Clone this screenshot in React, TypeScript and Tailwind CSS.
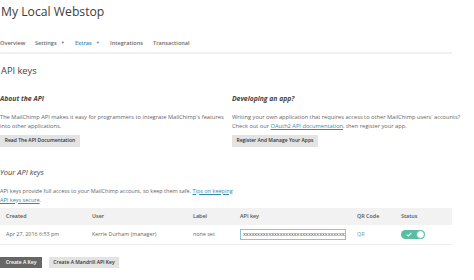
import React from "react";

const font = { fontFamily: '"Open Sans", "Liberation Sans", sans-serif' };

function Caret() {
  return <span className="ml-[4px] text-[4px] align-middle">▼</span>;
}

function Toggle() {
  return (
    <div className="w-[24px] h-[9px] rounded-full bg-[#5bbba3] relative flex items-center">
      <svg width="6" height="5" viewBox="0 0 6 5" className="ml-[5px]">
        <path d="M0.7 2.6 L2.3 4 L5.3 0.8" stroke="#fff" strokeWidth="1.1" fill="none" />
      </svg>
      <div className="absolute right-[0.5px] top-[0px] w-[9px] h-[9px] rounded-full bg-white border border-[#5bbba3]" />
    </div>
  );
}

export default function App() {
  return (
    <div className="w-[474px] h-[280px] bg-white overflow-hidden text-[#555]" style={font}>
      <div className="h-[24px] flex items-center pl-[1px] text-[12.2px] text-[#3d3d3d]">My Local Webstop</div>
      <div className="mt-[12px] w-[452px] h-[18px] pb-[2px] border-b-2 border-[#f0f0f0] flex items-center text-[5.6px] font-semibold text-[#6a6a6a]">
        <span className="w-[35px]">Overview</span>
        <span className="w-[40px]">Settings<Caret /></span>
        <span className="w-[35px] text-[#3e8db0]">Extras<Caret /></span>
        <span className="w-[43px]">Integrations</span>
        <span>Transactional</span>
      </div>
      <div className="mt-[9px] h-[16px] flex items-center pl-[1px] text-[9.3px] text-[#444]">API keys</div>
      <div className="flex">
        <div className="w-[232px]">
          <div className="mt-[15px] h-[10px] flex items-center text-[6.8px] font-bold italic text-[#444]">About the API</div>
          <p className="mt-[9px] text-[5.7px] leading-[8.5px] text-[#666]">
            The MailChimp API makes it easy for programmers to integrate MailChimp's features<br />into other applications.
          </p>
          <div className="mt-[5px] h-[12px] w-[80px] bg-[#e3e3e3] flex items-center justify-center text-[5px] font-semibold text-[#333]">Read The API Documentation</div>
        </div>
        <div className="flex-1">
          <div className="mt-[15px] h-[10px] flex items-center text-[6.8px] font-bold italic text-[#444]">Developing an app?</div>
          <p className="mt-[9px] text-[5.7px] leading-[8.5px] text-[#666]">
            Writing your own application that requires access to other MailChimp users' accounts?<br />Check out our <span className="text-[#2f8cb0] underline">OAuth2 API documentation</span>, then register your app.
          </p>
          <div className="mt-[5px] h-[12px] w-[86px] bg-[#e3e3e3] flex items-center justify-center text-[5px] font-semibold text-[#333]">Register And Manage Your Apps</div>
        </div>
      </div>
      <div className="mt-[21px] h-[10px] flex items-center text-[7.5px] italic text-[#444]">Your API keys</div>
      <p className="mt-[8.5px] text-[5.5px] leading-[9px] text-[#666]">
        API keys provide full access to your MailChimp account, so keep them safe. <span className="text-[#2f8cb0] underline">Tips on keeping</span><br /><span className="text-[#2f8cb0] underline">API keys secure</span>.
      </p>
      <div className="mt-[3.5px] w-[452px]">
        <div className="h-[17px] bg-[#f2f2f2] flex items-center text-[5.4px] font-semibold text-[#555]">
          <span className="w-[92px] pl-[6px]">Created</span>
          <span className="w-[101px]">User</span>
          <span className="w-[47px]">Label</span>
          <span className="w-[117px]">API key</span>
          <span className="w-[44px]">QR Code</span>
          <span>Status</span>
        </div>
        <div className="h-[20px] border-b border-[#eeeeee] flex items-center text-[5.4px] text-[#666]">
          <span className="w-[92px] pl-[6px]">Apr 27, 2016 6:53 pm</span>
          <span className="w-[101px]">Kerrie Durham (manager)</span>
          <span className="w-[47px]">none set</span>
          <div className="w-[117px]">
            <div className="w-[106px] h-[11px] border border-[#86c6d8] flex items-center px-[2px] overflow-hidden whitespace-nowrap text-[5.4px] text-[#444]">
              xxxxxxxxxxxxxxxxxxxxxxxxxxxxxxxxxxxxx
            </div>
          </div>
          <span className="w-[44px] text-[#6b9aaa]">QR</span>
          <Toggle />
        </div>
      </div>
      <div className="mt-[12px] flex gap-[7px] text-[5px] font-semibold">
        <div className="h-[11px] w-[42px] bg-[#666] text-white flex items-center justify-center">Create A Key</div>
        <div className="h-[11px] w-[70px] bg-[#e3e3e3] text-[#333] flex items-center justify-center">Create A Mandrill API Key</div>
      </div>
    </div>
  );
}
